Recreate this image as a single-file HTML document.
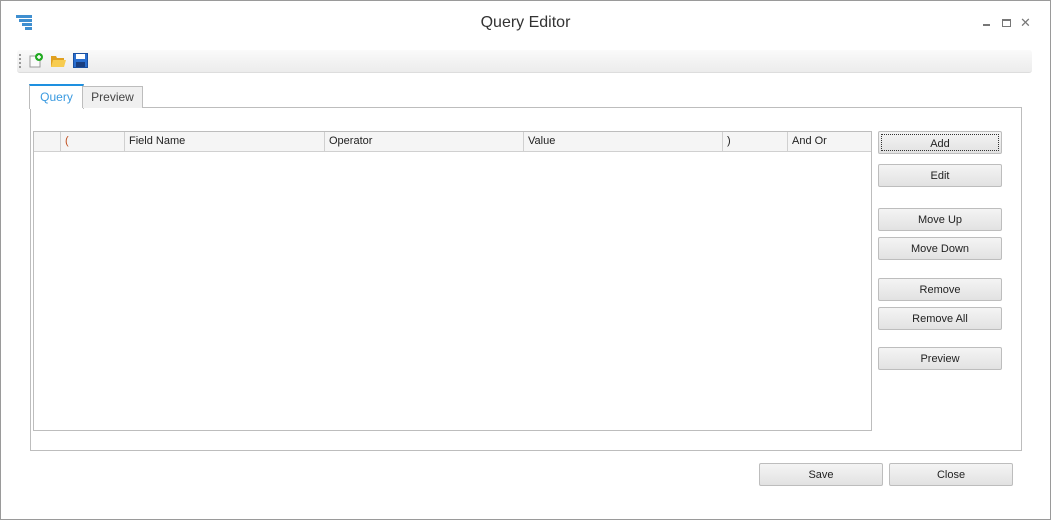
<!DOCTYPE html><html><head><style>
body{margin:0;width:1051px;height:520px;overflow:hidden;font-family:"Liberation Sans",sans-serif;font-size:11px;color:#222;background:#fff;position:relative}
.frame{position:absolute;left:0;top:0;width:1049px;height:518px;border:1px solid #9a9a9a}
.a{position:absolute}
.btn{position:absolute;left:878px;width:122px;height:21px;border:1px solid #bdbdbd;border-radius:2px;background:linear-gradient(#f4f4f4,#e2e2e2);text-align:center;line-height:23px;font-size:11px;color:#222}
.hd{position:absolute;top:0;height:19px;line-height:19px;border-right:1px solid #d0d0d0;padding-left:4px;box-sizing:border-box}
</style></head><body><div class="frame"></div>
<svg class="a" style="left:16px;top:15px" width="18" height="16"><g fill="#3f8fd0"><rect x="0" y="0" width="16" height="3"/><rect x="3" y="4" width="13" height="3"/><rect x="6" y="8" width="10" height="3"/><rect x="9" y="12" width="7" height="3"/></g></svg>
<div class="a" style="left:0;width:1051px;top:14px;text-align:center;font-size:16px;color:#333">Query Editor</div>
<div class="a" style="left:983px;top:24px;width:7px;height:2px;background:#777"></div>
<div class="a" style="left:1002px;top:19px;width:7px;height:5px;border:1px solid #777;border-top-width:2px"></div>
<div class="a" style="left:1020px;top:15px;font-size:13px;color:#777">✕</div>
<div class="a" style="left:17px;top:50px;width:1015px;height:22px;background:linear-gradient(#fafafa,#ececec);border-radius:3px;border-bottom:1px solid #ddd"></div>
<div class="a" style="left:19px;top:54px;width:2px;height:14px;background:repeating-linear-gradient(#999 0 2px,transparent 2px 4px)"></div>
<svg class="a" style="left:28px;top:52px" width="16" height="17"><path d="M2 4h7l3 3v8H2z" fill="#fafafa" stroke="#999"/><circle cx="11" cy="5" r="4" fill="#2a2"/><path d="M11 3v4M9 5h4" stroke="#fff" stroke-width="1.5"/></svg>
<svg class="a" style="left:50px;top:54px" width="17" height="14"><path d="M1 2h5l1 2h7v9H1z" fill="#e0a020"/><path d="M3 6h13l-2 7H1z" fill="#f7cc50"/></svg>
<svg class="a" style="left:73px;top:53px" width="15" height="15"><rect x="0.5" y="0.5" width="14" height="14" fill="#2a6fd0" stroke="#1a4f9f"/><rect x="3" y="1" width="9" height="5" fill="#fff"/><rect x="3" y="9" width="9" height="5" fill="#1a3f7f"/></svg>
<div class="a" style="left:30px;top:107px;width:990px;height:342px;border:1px solid #bdbdbd"></div>
<div class="a" style="left:29px;top:84px;width:53px;height:23px;border:1px solid #bdbdbd;border-bottom:none;border-top:2px solid #1e90e0;background:#fff;text-align:center;line-height:22px;font-size:12px"><span style="color:#3a9ae0">Query</span></div>
<div class="a" style="left:82px;top:86px;width:59px;height:21px;border:1px solid #bdbdbd;border-bottom:none;background:#f0f0f0;text-align:center;line-height:21px;color:#444;font-size:12px">Preview</div>
<div class="a" style="left:33px;top:131px;width:837px;height:298px;border:1px solid #bdbdbd;background:#fff">
<div class="a" style="left:0;top:0;width:837px;height:19px;background:#f5f5f5;border-bottom:1px solid #d0d0d0"></div>
<div class="hd" style="left:0;width:27px"></div>
<div class="hd" style="left:27px;width:64px;color:#c05020">(</div>
<div class="hd" style="left:91px;width:200px">Field Name</div>
<div class="hd" style="left:291px;width:199px">Operator</div>
<div class="hd" style="left:490px;width:199px">Value</div>
<div class="hd" style="left:689px;width:65px">)</div>
<div class="hd" style="left:754px;width:83px;border-right:none">And Or</div>
</div>
<div class="btn" style="top:131px"><div style="position:absolute;inset:2px;border:1px dotted #333;line-height:18px">Add</div></div>
<div class="btn" style="top:164px">Edit</div>
<div class="btn" style="top:208px">Move Up</div>
<div class="btn" style="top:237px">Move Down</div>
<div class="btn" style="top:278px">Remove</div>
<div class="btn" style="top:307px">Remove All</div>
<div class="btn" style="top:347px">Preview</div>
<div class="btn" style="top:463px;left:759px">Save</div>
<div class="btn" style="top:463px;left:889px">Close</div>
</body></html>
